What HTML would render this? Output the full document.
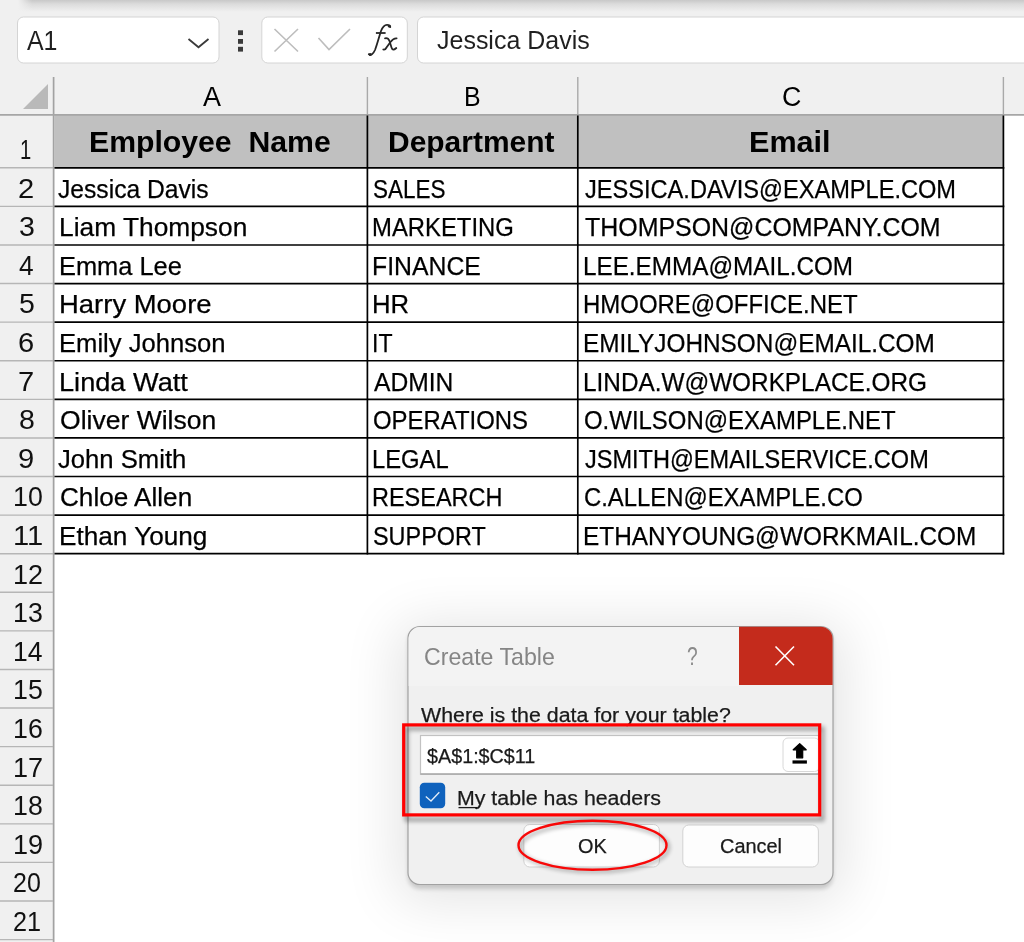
<!DOCTYPE html>
<html><head><meta charset="utf-8"><style>
html,body{margin:0;padding:0;width:1024px;height:942px;overflow:hidden;background:#f0f0f0;}
#s{position:absolute;left:0;top:0}
.t{position:absolute;white-space:pre;font-family:"Liberation Sans",sans-serif;transform-origin:0 0;-webkit-text-stroke:0.25px currentColor}
.b{-webkit-text-stroke:0}
.fx{position:absolute;font-family:"Liberation Serif",serif;font-style:italic;white-space:pre;transform-origin:0 0}
</style></head><body>
<svg id="s" width="1024" height="942" viewBox="0 0 1024 942">
<defs><linearGradient id="tg" x1="0" y1="0" x2="0" y2="1"><stop offset="0" stop-color="#c8c8c8"/><stop offset="0.35" stop-color="#dcdcdc"/><stop offset="1" stop-color="#f0f0f0"/></linearGradient><linearGradient id="tgl" x1="0" y1="0" x2="1" y2="0"><stop offset="0" stop-color="#f0f0f0" stop-opacity="1"/><stop offset="1" stop-color="#f0f0f0" stop-opacity="0"/></linearGradient><filter id="sh" x="-50%" y="-50%" width="200%" height="200%"><feGaussianBlur stdDeviation="28"/></filter><filter id="sh2" x="-10%" y="-10%" width="120%" height="120%"><feGaussianBlur stdDeviation="2"/></filter></defs>
<rect x="0" y="0" width="1024" height="12" fill="url(#tg)"/>
<rect x="0" y="0" width="18" height="12" fill="#f0f0f0"/>
<rect x="18" y="0" width="14" height="12" fill="url(#tgl)"/>
<rect x="17.5" y="17" width="201.5" height="46" rx="6" fill="#fff" stroke="#d4d4d4" stroke-width="1"/>
<rect x="261.8" y="17" width="145.5" height="46" rx="6" fill="#fff" stroke="#d4d4d4" stroke-width="1"/>
<rect x="417.5" y="17" width="640" height="46" rx="6" fill="#fff" stroke="#d4d4d4" stroke-width="1"/>
<polyline points="188.5,39 198.5,47.3 208.5,39" fill="none" stroke="#3a3a3a" stroke-width="1.8"/>
<rect x="238" y="30.3" width="5" height="4.8" fill="#3a3a3a"/>
<rect x="238" y="39" width="5" height="4.8" fill="#3a3a3a"/>
<rect x="238" y="46.8" width="5" height="4.8" fill="#3a3a3a"/>
<path d="M274.5,29 L298,51.5 M298,29 L274.5,51.5" stroke="#bdbdbd" stroke-width="1.6" fill="none"/>
<polyline points="318.5,38 329,49.5 350,29" fill="none" stroke="#bdbdbd" stroke-width="1.6"/>
<g fill="none" stroke="#262626" stroke-width="1.8" stroke-linecap="round"><path d="M368.8,54.3 C371,55.5 373,54.5 375,50 C377,45 379,37 381,31 C382.5,27 384.5,24.8 387,24.8 C389,24.8 390.3,25.8 390.3,27"/><path d="M375.9,33 L385.6,33" stroke-linecap="butt"/><path d="M385,38.3 C387,37.8 388.5,38.5 389.5,41 L391.5,47.5 C392.3,50 393.5,50.5 396.3,48"/><path d="M396.6,38.4 C394,38 392.5,39.5 390.5,42 L386.5,47.5 C385.5,49.5 384.5,50 383.3,49.5"/></g>
<circle cx="370.2" cy="54.4" r="1.5" fill="#262626"/><circle cx="389.3" cy="26.3" r="1.4" fill="#262626"/>
<rect x="0" y="65" width="1024" height="50" fill="#f0f0f0"/>
<polygon points="48,84 48,109 23,109" fill="#b9b9b9"/>
<rect x="54.5" y="115" width="970" height="830" fill="#fff"/>
<rect x="0" y="115" width="53.6" height="830" fill="#f0f0f0"/>
<rect x="54.5" y="115" width="949" height="52.8" fill="#c0c0c0"/>
<line x1="367.4" y1="77" x2="367.4" y2="115" stroke="#a9a9a9" stroke-width="1.4"/>
<line x1="577.8" y1="77" x2="577.8" y2="115" stroke="#a9a9a9" stroke-width="1.4"/>
<line x1="1003.4" y1="77" x2="1003.4" y2="115" stroke="#a9a9a9" stroke-width="1.4"/>
<line x1="53.6" y1="77" x2="53.6" y2="942" stroke="#a2a2a2" stroke-width="1.7"/>
<line x1="0" y1="114.8" x2="1024" y2="114.8" stroke="#a6a6a6" stroke-width="1.7"/>
<line x1="0" y1="167.80" x2="53" y2="167.80" stroke="#b6b6b6" stroke-width="1.4"/>
<line x1="0" y1="206.39" x2="53" y2="206.39" stroke="#b6b6b6" stroke-width="1.4"/>
<line x1="0" y1="244.98" x2="53" y2="244.98" stroke="#b6b6b6" stroke-width="1.4"/>
<line x1="0" y1="283.57" x2="53" y2="283.57" stroke="#b6b6b6" stroke-width="1.4"/>
<line x1="0" y1="322.16" x2="53" y2="322.16" stroke="#b6b6b6" stroke-width="1.4"/>
<line x1="0" y1="360.75" x2="53" y2="360.75" stroke="#b6b6b6" stroke-width="1.4"/>
<line x1="0" y1="399.34" x2="53" y2="399.34" stroke="#b6b6b6" stroke-width="1.4"/>
<line x1="0" y1="437.93" x2="53" y2="437.93" stroke="#b6b6b6" stroke-width="1.4"/>
<line x1="0" y1="476.52" x2="53" y2="476.52" stroke="#b6b6b6" stroke-width="1.4"/>
<line x1="0" y1="515.11" x2="53" y2="515.11" stroke="#b6b6b6" stroke-width="1.4"/>
<line x1="0" y1="553.70" x2="53" y2="553.70" stroke="#b6b6b6" stroke-width="1.4"/>
<line x1="0" y1="592.29" x2="53" y2="592.29" stroke="#b6b6b6" stroke-width="1.4"/>
<line x1="0" y1="630.88" x2="53" y2="630.88" stroke="#b6b6b6" stroke-width="1.4"/>
<line x1="0" y1="669.47" x2="53" y2="669.47" stroke="#b6b6b6" stroke-width="1.4"/>
<line x1="0" y1="708.06" x2="53" y2="708.06" stroke="#b6b6b6" stroke-width="1.4"/>
<line x1="0" y1="746.65" x2="53" y2="746.65" stroke="#b6b6b6" stroke-width="1.4"/>
<line x1="0" y1="785.24" x2="53" y2="785.24" stroke="#b6b6b6" stroke-width="1.4"/>
<line x1="0" y1="823.83" x2="53" y2="823.83" stroke="#b6b6b6" stroke-width="1.4"/>
<line x1="0" y1="862.42" x2="53" y2="862.42" stroke="#b6b6b6" stroke-width="1.4"/>
<line x1="0" y1="901.01" x2="53" y2="901.01" stroke="#b6b6b6" stroke-width="1.4"/>
<line x1="0" y1="939.60" x2="53" y2="939.60" stroke="#b6b6b6" stroke-width="1.4"/>
<line x1="0" y1="978.19" x2="53" y2="978.19" stroke="#b6b6b6" stroke-width="1.4"/>
<line x1="54.5" y1="167.80" x2="1004.3" y2="167.80" stroke="#000" stroke-width="1.7"/>
<line x1="54.5" y1="206.39" x2="1004.3" y2="206.39" stroke="#000" stroke-width="1.7"/>
<line x1="54.5" y1="244.98" x2="1004.3" y2="244.98" stroke="#000" stroke-width="1.7"/>
<line x1="54.5" y1="283.57" x2="1004.3" y2="283.57" stroke="#000" stroke-width="1.7"/>
<line x1="54.5" y1="322.16" x2="1004.3" y2="322.16" stroke="#000" stroke-width="1.7"/>
<line x1="54.5" y1="360.75" x2="1004.3" y2="360.75" stroke="#000" stroke-width="1.7"/>
<line x1="54.5" y1="399.34" x2="1004.3" y2="399.34" stroke="#000" stroke-width="1.7"/>
<line x1="54.5" y1="437.93" x2="1004.3" y2="437.93" stroke="#000" stroke-width="1.7"/>
<line x1="54.5" y1="476.52" x2="1004.3" y2="476.52" stroke="#000" stroke-width="1.7"/>
<line x1="54.5" y1="515.11" x2="1004.3" y2="515.11" stroke="#000" stroke-width="1.7"/>
<line x1="54.5" y1="553.70" x2="1004.3" y2="553.70" stroke="#000" stroke-width="1.7"/>
<line x1="367.4" y1="115.6" x2="367.4" y2="554.5" stroke="#000" stroke-width="1.7"/>
<line x1="577.8" y1="115.6" x2="577.8" y2="554.5" stroke="#000" stroke-width="1.7"/>
<line x1="1003.4" y1="115.6" x2="1003.4" y2="554.5" stroke="#000" stroke-width="1.7"/>
<rect x="398" y="625" width="445" height="275" rx="14" fill="#000" opacity="0.11" filter="url(#sh)"/>
<rect x="408" y="629" width="425" height="260" rx="12" fill="#000" opacity="0.16" filter="url(#sh2)"/>
<rect x="408" y="626.5" width="425" height="258" rx="12" fill="#f0f0f0" stroke="#a2a2a2" stroke-width="1.2"/>
<path d="M408.6,686 L408.6,639 A12,12 0 0 1 420.6,627.1 L739,627.1 L739,686 Z" fill="#f3f3f3"/>
<path d="M739,626.8 L820.5,626.8 A12,12 0 0 1 832.6,638.8 L832.6,685 L739,685 Z" fill="#c42b1c"/>
<path d="M775.5,646.5 L794,665.2 M794,646.5 L775.5,665.2" stroke="#fff" stroke-width="1.6"/>
<rect x="420.5" y="735.5" width="398" height="38.8" fill="#fff" stroke="#c2c2c2" stroke-width="1.2"/>
<line x1="420.5" y1="774" x2="818.5" y2="774" stroke="#a8a8a8" stroke-width="1.4"/>
<rect x="783" y="738" width="36.5" height="33.5" rx="5" fill="#fff" stroke="#d8d8d8" stroke-width="1"/>
<path d="M799.7,743.6 L806.2,749.8 L802.7,749.8 L802.7,757.8 L796.7,757.8 L796.7,749.8 L793.2,749.8 Z" fill="#000" stroke="#000" stroke-width="1.2" stroke-linejoin="round"/>
<rect x="792.5" y="760.4" width="14.4" height="3.2" fill="#000"/>
<rect x="419.8" y="782.8" width="25.4" height="25.4" rx="4.5" fill="#0f62bd"/>
<polyline points="425.8,796.6 431,801 439.3,792.3" fill="none" stroke="#e4edf8" stroke-width="1.3"/>
<line x1="458.5" y1="807.6" x2="477" y2="807.6" stroke="#1a1a1a" stroke-width="1.3"/>
<rect x="523.8" y="824.5" width="135.6" height="42.5" rx="6" fill="#fdfdfd" stroke="#d2d2d2" stroke-width="1"/>
<rect x="682.8" y="825" width="135.6" height="42" rx="6" fill="#fdfdfd" stroke="#d2d2d2" stroke-width="1"/>
</svg>
<div class="t b" style="left:27.00px;top:27.55px;font-size:27.00px;line-height:27.00px;font-weight:400;color:#1f1f1f;transform:scaleX(0.9228)">A1</div>
<div class="t b" style="left:436.80px;top:27.62px;font-size:25.50px;line-height:25.50px;font-weight:400;color:#1f1f1f;transform:scaleX(0.9797)">Jessica Davis</div>
<div class="t b" style="left:202.50px;top:83.65px;font-size:27.00px;line-height:27.00px;font-weight:400;color:#000;transform:scaleX(0.9989)">A</div>
<div class="t b" style="left:464.11px;top:83.65px;font-size:27.00px;line-height:27.00px;font-weight:400;color:#000;transform:scaleX(0.9224)">B</div>
<div class="t b" style="left:781.96px;top:83.65px;font-size:27.00px;line-height:27.00px;font-weight:400;color:#000;transform:scaleX(0.9935)">C</div>
<div class="t b" style="left:88.99px;top:127.29px;font-size:29.30px;line-height:29.30px;font-weight:700;color:#000;transform:scaleX(1.0308)">Employee  Name</div>
<div class="t b" style="left:388.40px;top:127.29px;font-size:29.30px;line-height:29.30px;font-weight:700;color:#000;transform:scaleX(1.0226)">Department</div>
<div class="t b" style="left:749.16px;top:127.29px;font-size:29.30px;line-height:29.30px;font-weight:700;color:#000;transform:scaleX(1.0441)">Email</div>
<div class="t" style="left:58.31px;top:176.83px;font-size:25.60px;line-height:25.60px;font-weight:400;color:#000;transform:scaleX(0.9630)">Jessica Davis</div>
<div class="t" style="left:372.88px;top:176.15px;font-size:26.40px;line-height:26.40px;font-weight:400;color:#000;transform:scaleX(0.8520)">SALES</div>
<div class="t" style="left:584.53px;top:176.15px;font-size:26.40px;line-height:26.40px;font-weight:400;color:#000;transform:scaleX(0.8941)">JESSICA.DAVIS@EXAMPLE.COM</div>
<div class="t" style="left:58.59px;top:215.42px;font-size:25.60px;line-height:25.60px;font-weight:400;color:#000;transform:scaleX(1.0287)">Liam Thompson</div>
<div class="t" style="left:372.09px;top:213.74px;font-size:26.40px;line-height:26.40px;font-weight:400;color:#000;transform:scaleX(0.9041)">MARKETING</div>
<div class="t" style="left:584.50px;top:213.74px;font-size:26.40px;line-height:26.40px;font-weight:400;color:#000;transform:scaleX(0.9451)">THOMPSON@COMPANY.COM</div>
<div class="t" style="left:58.87px;top:254.01px;font-size:25.60px;line-height:25.60px;font-weight:400;color:#000;transform:scaleX(0.9927)">Emma Lee</div>
<div class="t" style="left:372.01px;top:253.33px;font-size:26.40px;line-height:26.40px;font-weight:400;color:#000;transform:scaleX(0.9403)">FINANCE</div>
<div class="t" style="left:583.06px;top:253.33px;font-size:26.40px;line-height:26.40px;font-weight:400;color:#000;transform:scaleX(0.9195)">LEE.EMMA@MAIL.COM</div>
<div class="t" style="left:58.70px;top:291.60px;font-size:25.60px;line-height:25.60px;font-weight:400;color:#000;transform:scaleX(1.0726)">Harry Moore</div>
<div class="t" style="left:371.94px;top:290.92px;font-size:26.40px;line-height:26.40px;font-weight:400;color:#000;transform:scaleX(0.9744)">HR</div>
<div class="t" style="left:583.08px;top:290.92px;font-size:26.40px;line-height:26.40px;font-weight:400;color:#000;transform:scaleX(0.9080)">HMOORE@OFFICE.NET</div>
<div class="t" style="left:58.85px;top:331.19px;font-size:25.60px;line-height:25.60px;font-weight:400;color:#000;transform:scaleX(1.0002)">Emily Johnson</div>
<div class="t" style="left:371.92px;top:329.51px;font-size:26.40px;line-height:26.40px;font-weight:400;color:#000;transform:scaleX(0.8741)">IT</div>
<div class="t" style="left:583.05px;top:329.51px;font-size:26.40px;line-height:26.40px;font-weight:400;color:#000;transform:scaleX(0.9231)">EMILYJOHNSON@EMAIL.COM</div>
<div class="t" style="left:58.73px;top:369.78px;font-size:25.60px;line-height:25.60px;font-weight:400;color:#000;transform:scaleX(1.0612)">Linda Watt</div>
<div class="t" style="left:374.00px;top:369.10px;font-size:26.40px;line-height:26.40px;font-weight:400;color:#000;transform:scaleX(0.9337)">ADMIN</div>
<div class="t" style="left:583.05px;top:369.10px;font-size:26.40px;line-height:26.40px;font-weight:400;color:#000;transform:scaleX(0.9224)">LINDA.W@WORKPLACE.ORG</div>
<div class="t" style="left:59.57px;top:408.37px;font-size:25.60px;line-height:25.60px;font-weight:400;color:#000;transform:scaleX(1.0365)">Oliver Wilson</div>
<div class="t" style="left:372.80px;top:406.69px;font-size:26.40px;line-height:26.40px;font-weight:400;color:#000;transform:scaleX(0.9058)">OPERATIONS</div>
<div class="t" style="left:583.80px;top:406.69px;font-size:26.40px;line-height:26.40px;font-weight:400;color:#000;transform:scaleX(0.9073)">O.WILSON@EXAMPLE.NET</div>
<div class="t" style="left:58.29px;top:446.96px;font-size:25.60px;line-height:25.60px;font-weight:400;color:#000;transform:scaleX(1.0020)">John Smith</div>
<div class="t" style="left:372.10px;top:446.28px;font-size:26.40px;line-height:26.40px;font-weight:400;color:#000;transform:scaleX(0.9013)">LEGAL</div>
<div class="t" style="left:584.53px;top:446.28px;font-size:26.40px;line-height:26.40px;font-weight:400;color:#000;transform:scaleX(0.8915)">JSMITH@EMAILSERVICE.COM</div>
<div class="t" style="left:59.59px;top:484.55px;font-size:25.60px;line-height:25.60px;font-weight:400;color:#000;transform:scaleX(1.0208)">Chloe Allen</div>
<div class="t" style="left:372.12px;top:483.87px;font-size:26.40px;line-height:26.40px;font-weight:400;color:#000;transform:scaleX(0.8895)">RESEARCH</div>
<div class="t" style="left:583.81px;top:483.87px;font-size:26.40px;line-height:26.40px;font-weight:400;color:#000;transform:scaleX(0.9040)">C.ALLEN@EXAMPLE.CO</div>
<div class="t" style="left:58.81px;top:524.14px;font-size:25.60px;line-height:25.60px;font-weight:400;color:#000;transform:scaleX(1.0221)">Ethan Young</div>
<div class="t" style="left:372.83px;top:523.46px;font-size:26.40px;line-height:26.40px;font-weight:400;color:#000;transform:scaleX(0.8870)">SUPPORT</div>
<div class="t" style="left:583.05px;top:523.46px;font-size:26.40px;line-height:26.40px;font-weight:400;color:#000;transform:scaleX(0.9243)">ETHANYOUNG@WORKMAIL.COM</div>
<div class="t b" style="left:19.68px;top:135.56px;font-size:27.70px;line-height:27.70px;font-weight:400;color:#111;transform:scaleX(0.7304)">1</div>
<div class="t b" style="left:18.24px;top:175.15px;font-size:27.70px;line-height:27.70px;font-weight:400;color:#111;transform:scaleX(1.0516)">2</div>
<div class="t b" style="left:18.56px;top:212.74px;font-size:27.70px;line-height:27.70px;font-weight:400;color:#111;transform:scaleX(1.0293)">3</div>
<div class="t b" style="left:19.17px;top:252.33px;font-size:27.70px;line-height:27.70px;font-weight:400;color:#111;transform:scaleX(0.9485)">4</div>
<div class="t b" style="left:18.56px;top:289.92px;font-size:27.70px;line-height:27.70px;font-weight:400;color:#111;transform:scaleX(1.0293)">5</div>
<div class="t b" style="left:18.24px;top:328.50px;font-size:27.70px;line-height:27.70px;font-weight:400;color:#111;transform:scaleX(1.0516)">6</div>
<div class="t b" style="left:18.24px;top:368.10px;font-size:27.70px;line-height:27.70px;font-weight:400;color:#111;transform:scaleX(1.0516)">7</div>
<div class="t b" style="left:18.56px;top:405.69px;font-size:27.70px;line-height:27.70px;font-weight:400;color:#111;transform:scaleX(1.0293)">8</div>
<div class="t b" style="left:18.24px;top:445.28px;font-size:27.70px;line-height:27.70px;font-weight:400;color:#111;transform:scaleX(1.0516)">9</div>
<div class="t b" style="left:12.86px;top:482.87px;font-size:27.70px;line-height:27.70px;font-weight:400;color:#111;transform:scaleX(0.9663)">10</div>
<div class="t b" style="left:12.67px;top:522.46px;font-size:27.70px;line-height:27.70px;font-weight:400;color:#111;transform:scaleX(1.0513)">11</div>
<div class="t b" style="left:12.84px;top:561.04px;font-size:27.70px;line-height:27.70px;font-weight:400;color:#111;transform:scaleX(0.9762)">12</div>
<div class="t b" style="left:12.86px;top:598.64px;font-size:27.70px;line-height:27.70px;font-weight:400;color:#111;transform:scaleX(0.9663)">13</div>
<div class="t b" style="left:12.88px;top:638.23px;font-size:27.70px;line-height:27.70px;font-weight:400;color:#111;transform:scaleX(0.9567)">14</div>
<div class="t b" style="left:12.86px;top:675.81px;font-size:27.70px;line-height:27.70px;font-weight:400;color:#111;transform:scaleX(0.9663)">15</div>
<div class="t b" style="left:12.86px;top:715.41px;font-size:27.70px;line-height:27.70px;font-weight:400;color:#111;transform:scaleX(0.9663)">16</div>
<div class="t b" style="left:12.84px;top:754.00px;font-size:27.70px;line-height:27.70px;font-weight:400;color:#111;transform:scaleX(0.9762)">17</div>
<div class="t b" style="left:12.86px;top:791.59px;font-size:27.70px;line-height:27.70px;font-weight:400;color:#111;transform:scaleX(0.9663)">18</div>
<div class="t b" style="left:12.84px;top:831.18px;font-size:27.70px;line-height:27.70px;font-weight:400;color:#111;transform:scaleX(0.9762)">19</div>
<div class="t b" style="left:12.75px;top:868.76px;font-size:27.70px;line-height:27.70px;font-weight:400;color:#111;transform:scaleX(0.9025)">20</div>
<div class="t b" style="left:12.74px;top:908.36px;font-size:27.70px;line-height:27.70px;font-weight:400;color:#111;transform:scaleX(0.9115)">21</div>
<div class="t b" style="left:423.84px;top:645.12px;font-size:24.80px;line-height:24.80px;font-weight:400;color:#858585;transform:scaleX(0.9334)">Create Table</div>
<div class="t b" style="left:687.23px;top:643.95px;font-size:25.00px;line-height:25.00px;font-weight:400;color:#8a8a8a;transform:scaleX(0.7667)">?</div>
<div class="t" style="left:420.79px;top:704.50px;font-size:20.00px;line-height:20.00px;font-weight:400;color:#1a1a1a;transform:scaleX(1.0678)">Where is the data for your table?</div>
<div class="t" style="left:426.50px;top:745.56px;font-size:20.40px;line-height:20.40px;font-weight:400;color:#1a1a1a;transform:scaleX(0.9687)">$A$1:$C$11</div>
<div class="t" style="left:456.89px;top:788.20px;font-size:20.00px;line-height:20.00px;font-weight:400;color:#1a1a1a;transform:scaleX(1.0667)">My table has headers</div>
<div class="t" style="left:577.50px;top:836.00px;font-size:20.00px;line-height:20.00px;font-weight:400;color:#1a1a1a;transform:scaleX(0.9964)">OK</div>
<div class="t" style="left:720.30px;top:836.00px;font-size:20.00px;line-height:20.00px;font-weight:400;color:#1a1a1a;transform:scaleX(0.9967)">Cancel</div>
<svg id="o" width="1024" height="942" viewBox="0 0 1024 942" style="position:absolute;left:0;top:0"><defs><filter id="sh3" x="-10%" y="-10%" width="120%" height="120%"><feGaussianBlur stdDeviation="2"/></filter></defs>
<rect x="406.5" y="728.5" width="416" height="91" fill="none" stroke="#000" stroke-width="4" opacity="0.35" filter="url(#sh3)"/>
<rect x="403.7" y="724.9" width="416" height="90" fill="none" stroke="#ff0000" stroke-width="3.2"/>
<ellipse cx="594.5" cy="847.5" rx="74" ry="24" fill="none" stroke="#000" stroke-width="3" opacity="0.3" filter="url(#sh3)"/>
<ellipse cx="592.5" cy="845.2" rx="74" ry="24.5" fill="none" stroke="#f80808" stroke-width="2.4"/>
</svg>
</body></html>
